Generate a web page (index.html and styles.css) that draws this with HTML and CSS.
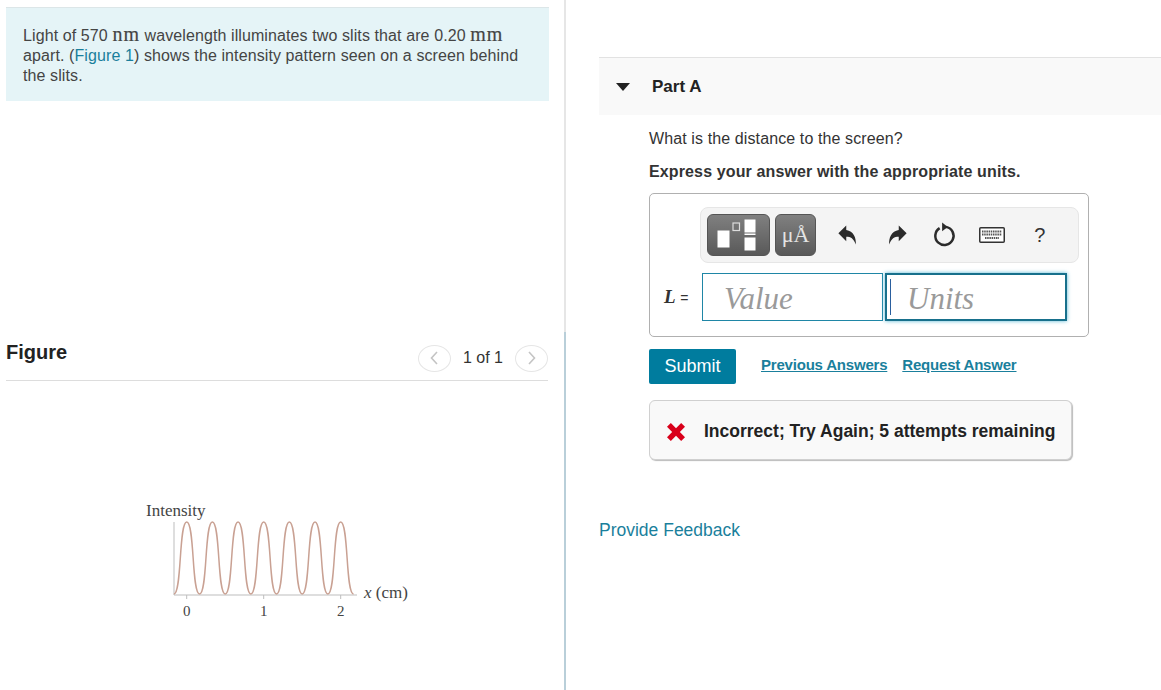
FILE: index.html
```html
<!DOCTYPE html>
<html lang="en">
<head>
<meta charset="utf-8">
<title>Part A</title>
<link rel="stylesheet" href="styles.css">
</head>
<body>
<div class="page">
  <div class="left">
    <section class="left-top">
      <div class="intro">
        Light of 570 <span class="math">nm</span> wavelength illuminates two slits that are 0.20 <span class="math">mm</span> apart. (<a class="link" href="#">Figure 1</a>) shows the intensity pattern seen on a screen behind the slits.
      </div>
    </section>
    <section class="left-bottom">
      <div class="fig-head">
        <h2 class="fig-title">Figure</h2>
        <div class="pager">
          <span class="page-btn"><svg width="8" height="14" viewBox="0 0 8 14"><path d="M7 1 1.500 7 7 13" fill="none" stroke="#c4c4c4" stroke-width="1.600"/></svg></span>
          <span class="page-text">1 of 1</span>
          <span class="page-btn"><svg width="8" height="14" viewBox="0 0 8 14"><path d="M1 1 6.500 7 1 13" fill="none" stroke="#c4c4c4" stroke-width="1.600"/></svg></span>
        </div>
      </div>
      <svg class="plot" width="290" height="135" viewBox="0 0 290 135">
        <text x="16" y="26" class="plot-t">Intensity</text>
        <path d="M44 32V105M44 105H227" stroke="#bdbdbd" stroke-width="1" fill="none"/>
        <path d="M56.700 105v4M133.700 105v4M210.700 105v4" stroke="#bdbdbd" stroke-width="1" fill="none"/>
        <path d="M43.900 104c8 0 4.830-72 12.830-72s4.830 72 12.830 72 4.830-72 12.830-72 4.830 72 12.830 72 4.830-72 12.830-72 4.830 72 12.830 72 4.830-72 12.830-72 4.830 72 12.830 72 4.830-72 12.830-72 4.830 72 12.830 72 4.830-72 12.830-72 4.830 72 12.830 72 4.830-72 12.830-72 4.830 72 12.830 72" fill="none" stroke="#c9a193" stroke-width="1.500"/>
        <text x="234" y="108" class="plot-t"><tspan font-style="italic">x</tspan> (cm)</text>
        <text x="56.700" y="126" class="plot-n">0</text>
        <text x="133.700" y="126" class="plot-n">1</text>
        <text x="210.700" y="126" class="plot-n">2</text>
      </svg>
    </section>
  </div>
  <main class="right">
    <div class="part-head">
      <svg class="caret" width="14" height="8" viewBox="0 0 14 8"><path d="M0 0H14L7 8Z" fill="#222"/></svg>
      <h1 class="part-title">Part A</h1>
    </div>
    <div class="part-body">
      <p class="question">What is the distance to the screen?</p>
      <p class="instr">Express your answer with the appropriate units.</p>
      <div class="answer">
        <div class="toolbar">
          <button class="tool tool-wide" type="button">
            <svg width="50" height="34" viewBox="0 0 50 34">
              <rect x="3.500" y="12.500" width="12" height="17" fill="#fff"/>
              <rect x="19" y="5" width="6.500" height="7.500" fill="none" stroke="#ddd" stroke-width="1.200"/>
              <rect x="30.500" y="1.500" width="11" height="13" fill="#fff"/>
              <rect x="30.500" y="15.500" width="11" height="1.500" fill="#fff"/>
              <rect x="30.500" y="19.500" width="11" height="13" fill="#fff"/>
            </svg>
          </button>
          <button class="tool tool-unit" type="button">μÅ</button>
          <div class="actions">
            <span class="slot"><svg width="27" height="27" viewBox="0 0 24 24"><path d="M10 7V3L3 10l7 7v-4c4 0 6.500 1.500 8.500 7 .5-6-2-12-8.500-13z" fill="#2b2b2b"/></svg></span>
            <span class="slot"><svg width="27" height="27" viewBox="0 0 24 24"><path d="M14 7V3l7 7-7 7v-4c-4 0-6.500 1.500-8.500 7-.5-6 2-12 8.500-13z" fill="#2b2b2b"/></svg></span>
            <span class="slot"><svg width="30" height="30" viewBox="0 0 24 24"><path d="M13.500 5.500a7.300 7.300 0 1 1-5 1" fill="none" stroke="#2b2b2b" stroke-width="2"/><path d="M10.500 2 15 5.500 10.500 9Z" fill="#2b2b2b"/></svg></span>
            <span class="slot"><svg width="26" height="16" viewBox="0 0 26 16"><rect x=".75" y=".75" width="24.500" height="14.500" rx="1" fill="#fff" stroke="#333" stroke-width="1.500"/><path d="M3 4.500H23M3 7.500H23M6 11H20" stroke="#555" stroke-width="2" stroke-dasharray="1.500 .7"/></svg></span>
            <span class="slot help">?</span>
          </div>
        </div>
        <div class="input-row">
          <span class="var"><i>L</i> <small>=</small></span>
          <span class="field">Value</span>
          <span class="field field-focus"><span class="cursor"></span>Units</span>
        </div>
      </div>
      <div class="btn-row">
        <button class="submit" type="button">Submit</button>
        <a class="blink" href="#">Previous Answers</a>
        <a class="blink" href="#">Request Answer</a>
      </div>
      <div class="feedback">
        <svg width="18" height="18" viewBox="2 2 14 14"><path d="M2 5 5 2l4 4 4-4 3 3-4 4 4 4-3 3-4-4-4 4-3-3 4-4Z" fill="#d9001b"/></svg>
        <span>Incorrect; Try Again; 5 attempts remaining</span>
      </div>
    </div>
    <a class="provide" href="#">Provide Feedback</a>
  </main>
</div>
</body>
</html>
```
FILE: styles.css
```css
* { box-sizing: border-box; }
html, body { margin: 0; height: 100%; }
body { font-family: "Liberation Sans", Arial, sans-serif; color: #333; background: #fff; overflow: hidden; }
.page { display: flex; width: 1161px; height: 690px; }

.left { width: 566px; flex: none; display: flex; flex-direction: column; }
.left-top { height: 332px; padding: 7px 15px 0 6px; border-right: 2px solid #e6e6e6; }
.left-bottom { flex: 1; padding: 0 16px 0 6px; border-right: 2px solid #b9cfd9; }
.intro { background: #e5f4f7; border-top: 1px solid #dce6e8; height: 94px; padding: 17px 17px 0; font-size: 16px; line-height: 20px; letter-spacing: .1px; color: #444; }
.math { font-family: "Liberation Serif", serif; font-size: 20px; line-height: 18px; letter-spacing: 1px; -webkit-text-stroke: .2px #444; }
.link { color: #1a7f9c; text-decoration: none; }

.fig-head { display: flex; align-items: center; justify-content: space-between; height: 49px; border-bottom: 1px solid #ddd; padding-top: 6px; }
.fig-title { margin: 0; font-size: 20px; font-weight: bold; color: #222; position: relative; top: -7px; }
.pager { display: flex; align-items: center; gap: 12px; position: relative; top: -1px; }
.page-btn { width: 33px; height: 27px; border: 1px solid #e6e6e6; border-radius: 50%; display: flex; align-items: center; justify-content: center; }
.page-text { font-size: 16px; color: #333; }
.plot { display: block; margin: 109px 0 0 124px; }
.plot-t { font-family: "Liberation Serif", serif; font-size: 17px; fill: #444; }
.plot-n { font-family: "Liberation Serif", serif; font-size: 15px; fill: #444; text-anchor: middle; }

.right { flex: 1; padding: 57px 0 0 33px; }
.part-head { display: flex; align-items: center; height: 58px; background: #f9f9f9; border-top: 1px solid #e2e2e2; padding-left: 17px; }
.caret { margin-right: 22px; }
.part-title { margin: 0; font-size: 17px; font-weight: bold; color: #222; }
.part-body { padding: 14px 0 0 50px; }
.question { margin: 0; font-size: 16px; line-height: 20px; letter-spacing: .11px; color: #333; }
.instr { margin: 13px 0 0; font-size: 16px; line-height: 20px; letter-spacing: .13px; font-weight: bold; color: #333; }
.answer { width: 440px; height: 144px; margin-top: 11px; border: 1px solid #b0b0b0; border-radius: 5px; padding: 13px 21px 0 14px; }
.toolbar { margin: 0 -12px 0 36px; height: 56px; background: #f4f4f4; border: 1px solid #e6e6e6; border-radius: 8px; display: flex; align-items: center; padding: 0 6px; gap: 5px; }
.tool { flex: none; height: 42px; border: 1px solid #555; border-radius: 6px; background: linear-gradient(#808080, #595959); padding: 0; display: flex; align-items: center; justify-content: center; }
.tool-wide { width: 63px; }
.tool-unit { width: 41px; font-family: "Liberation Serif", serif; font-size: 22px; color: #e4e4e4; }
.actions { display: flex; align-items: center; margin-left: 4px; }
.slot { width: 47.750px; display: flex; align-items: center; justify-content: center; }
.help { font-size: 20px; color: #333; }
.input-row { display: flex; align-items: center; margin-top: 10px; height: 48px; }
.var { width: 38px; font-family: "Liberation Serif", serif; font-size: 19px; color: #333; white-space: nowrap; }
.var i { font-weight: bold; }
.var small { font-family: "Liberation Sans", sans-serif; font-size: 14px; }
.field { width: 181px; height: 48px; border: 1px solid #1f86a6; display: flex; align-items: center; padding: 3px 0 0 21px; font-family: "Liberation Serif", serif; font-style: italic; font-size: 31px; color: #9a9a9a; position: relative; }
.field-focus { width: 182px; margin-left: 2px; padding-left: 20px; border: 2px solid #17708c; box-shadow: 0 0 4px #56b6d4; }
.cursor { position: absolute; left: 3px; top: 4px; bottom: 4px; width: 1px; background: #2a5f9e; }
.btn-row { display: flex; align-items: center; margin-top: 12px; }
.submit { width: 87px; height: 35px; border: 0; border-radius: 2px; background: #007c9e; color: #fff; font: 18px "Liberation Sans", sans-serif; padding: 0; margin-right: 25px; }
.blink { color: #1a7f9c; font-size: 15px; font-weight: bold; letter-spacing: -.2px; margin-right: 15px; position: relative; top: -2px; }
.feedback { width: 423px; height: 60px; margin-top: 16px; display: flex; align-items: center; gap: 19px; padding: 3px 0 0 17px; background: #f9f9f9; border: 1px solid #d0d0d0; border-radius: 6px; box-shadow: 1px 1px 1px #bbb; font-size: 17.500px; font-weight: bold; color: #222; white-space: nowrap; }
.provide { display: block; margin-top: 60px; font-size: 17.500px; color: #1a7f9c; text-decoration: none; }
```
